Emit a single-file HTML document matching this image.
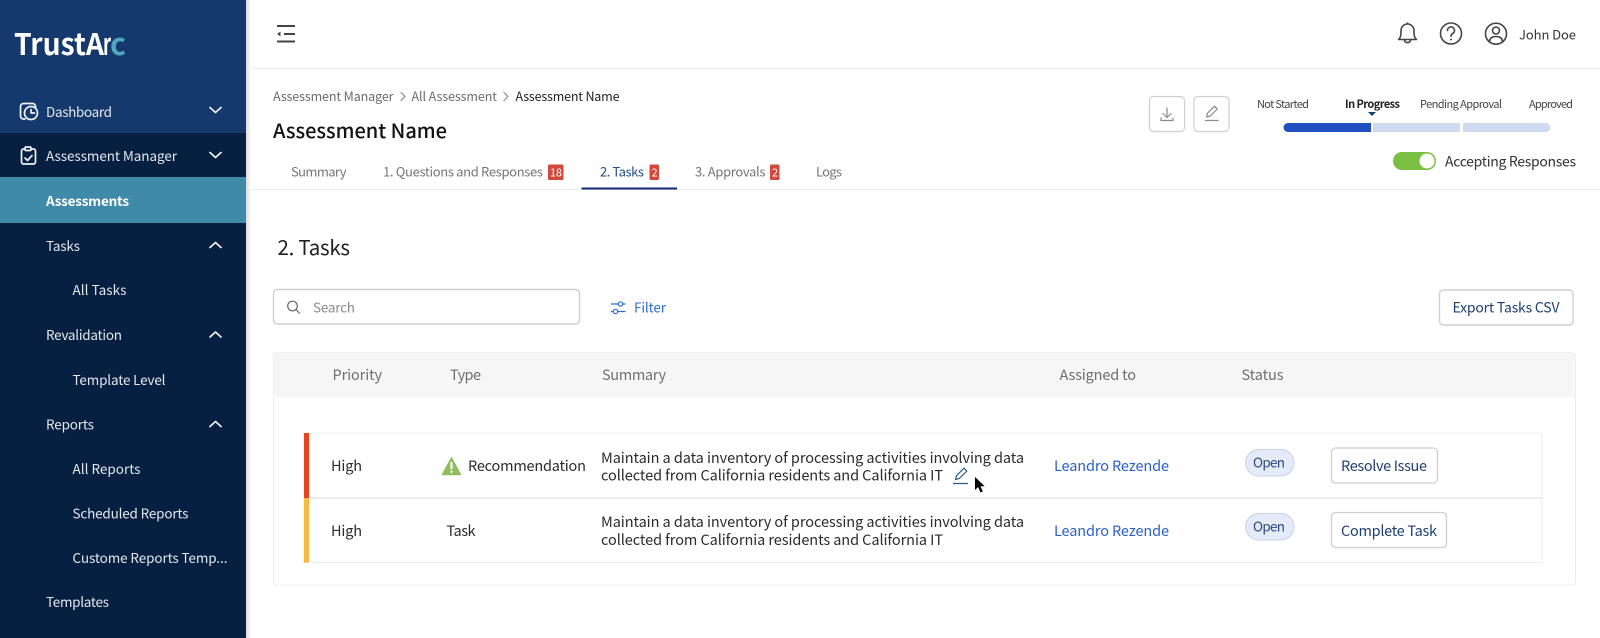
<!DOCTYPE html>
<html lang="en"><head><meta charset="utf-8"><title>Assessment Name - Tasks</title>
<style>
html,body{margin:0;padding:0;background:#fff;width:1600px;height:638px;overflow:hidden}
svg{display:block}
text{font-family:"Noto Sans CJK JP","Liberation Sans",sans-serif;white-space:pre}
.n{font-size:13.5px;fill:#e3e8ef}
.bc{font-size:12.5px;fill:#6b6b6b}
.tab{font-size:13px;fill:#757575}
.th{font-size:14.5px;fill:#6f6f6f}
.td{font-size:14.5px;fill:#2b2b2b}
.lnk{font-size:14.5px;fill:#2a5fc9}
.btn{font-size:14.5px;fill:#1f3f70}
.st{font-size:11px;fill:#444}
.bd{font-size:11px;fill:#fff}
.ic{fill:none;stroke:#444;stroke-width:1.6;stroke-linecap:round;stroke-linejoin:round}
.wi{fill:none;stroke:#eef2f7;stroke-width:1.7;stroke-linecap:round;stroke-linejoin:round}
.gr{fill:none;stroke:#8a8a8a;stroke-width:1.2;stroke-linecap:round;stroke-linejoin:round}
</style></head><body>
<svg width="1600" height="638" viewBox="0 0 1600 638" xmlns="http://www.w3.org/2000/svg">
<defs><linearGradient id="sh" x1="0" x2="1" y1="0" y2="0"><stop offset="0" stop-color="#000" stop-opacity=".14"/><stop offset="1" stop-color="#000" stop-opacity="0"/></linearGradient></defs>
<rect width="1600" height="638" fill="#fff"/>

<!-- Sidebar -->
<rect x="246" width="5" height="638" fill="url(#sh)"/>
<rect width="246" height="638" fill="#071f40"/>
<rect width="246" height="133" fill="#15396c"/>
<rect y="177" width="246" height="46" fill="#3f8aa8"/>
<text x="14" y="55" font-size="30" font-weight="700" fill="#fff" textLength="90" lengthAdjust="spacingAndGlyphs">TrustA</text>
<text x="103" y="55" font-size="30" font-weight="700" fill="#fff" textLength="8" lengthAdjust="spacingAndGlyphs">r</text>
<text x="110" y="55" font-size="30" font-weight="700" fill="#4fa6bf" textLength="16" lengthAdjust="spacingAndGlyphs">c</text>

<path class="wi" d="M25 119h-1.500a3 3 0 0 1-3-3v-9.500a3 3 0 0 1 3-3h9a3 3 0 0 1 3 3v1.500"/>
<circle class="wi" cx="31" cy="113" r="6.500"/><path class="wi" d="M31 109.500v3.500h3.500"/>
<path class="wi" d="M25 149h-1.500a2 2 0 0 0-2 2v11a2 2 0 0 0 2 2h10a2 2 0 0 0 2-2v-11a2 2 0 0 0-2-2h-1.500"/>
<rect class="wi" x="25" y="147" width="6" height="3.500" rx="1"/><path class="wi" d="M25 158l2.500 2.500 4.500-5"/>

<text class="n" x="46" y="117" textLength="66" lengthAdjust="spacing">Dashboard</text>
<text class="n" x="46" y="161" textLength="131" lengthAdjust="spacing">Assessment Manager</text>
<text class="n" x="46" y="206" textLength="83" lengthAdjust="spacing" font-weight="700" style="fill:#fff">Assessments</text>
<text class="n" x="46" y="251" textLength="34" lengthAdjust="spacing">Tasks</text>
<text class="n" x="72.500" y="295" textLength="54" lengthAdjust="spacing">All Tasks</text>
<text class="n" x="46" y="340" textLength="76" lengthAdjust="spacing">Revalidation</text>
<text class="n" x="72.500" y="385" textLength="93" lengthAdjust="spacing">Template Level</text>
<text class="n" x="46" y="429.500" textLength="48" lengthAdjust="spacing">Reports</text>
<text class="n" x="72.500" y="474" textLength="68" lengthAdjust="spacing">All Reports</text>
<text class="n" x="72.500" y="518.500" textLength="116" lengthAdjust="spacing">Scheduled Reports</text>
<text class="n" x="72.500" y="563" textLength="155" lengthAdjust="spacing">Custome Reports Temp...</text>
<text class="n" x="46" y="607" textLength="63" lengthAdjust="spacing">Templates</text>

<path class="wi" d="M210 107.500l5.500 5 5.500-5M210 152.500l5.500 5 5.500-5M210 247.500l5.500-5 5.500 5M210 337l5.500-5 5.500 5M210 426.500l5.500-5 5.500 5"/>

<!-- Top bar -->
<rect x="251" y="68" width="1349" height="1" fill="#eaeaea"/>
<path d="M277 26h18M284 34h11M277 41.500h18" stroke="#444" stroke-width="2" fill="none"/>
<path d="M277 34l3.500-2.500v5z" fill="#444"/>
<path class="ic" d="M1398.500 39.500c2-1.500 2.500-3.500 2.500-7v-2a6.500 6.500 0 0 1 13 0v2c0 3.500.5 5.500 2.500 7zM1404.500 40.500a3.200 3.200 0 0 0 6 0M1407.500 24v-1"/>
<circle class="ic" cx="1451" cy="33.500" r="10.500"/>
<path class="ic" d="M1447.500 30.500a3.500 3.500 0 1 1 5.200 3c-1.200.7-1.700 1.300-1.700 2.700"/><circle cx="1451" cy="39.500" r="1" fill="#444"/>
<circle class="ic" cx="1496" cy="33.700" r="10.500"/><circle class="ic" cx="1496" cy="30.500" r="3.500"/>
<path class="ic" d="M1489.500 41.500c.3-3.500 2.500-5 6.500-5s6.200 1.500 6.500 5"/>
<text x="1519" y="39.500" font-size="13" fill="#333" textLength="57" lengthAdjust="spacing">John Doe</text>

<!-- Breadcrumb and title -->
<text class="bc" x="273" y="101" textLength="120.500" lengthAdjust="spacing">Assessment Manager</text>
<path class="gr" d="M401 92.500l4 4-4 4M504 92.500l4 4-4 4"/>
<text class="bc" x="411.500" y="101" textLength="85.500" lengthAdjust="spacing">All Assessment</text>
<text class="bc" x="515.500" y="101" textLength="104" lengthAdjust="spacing" style="fill:#222">Assessment Name</text>
<text x="273" y="138" font-size="20" font-weight="500" fill="#111" textLength="174" lengthAdjust="spacing">Assessment Name</text>

<!-- Tabs -->
<rect x="251" y="189" width="1349" height="1" fill="#eaeaea"/>
<text class="tab" x="291" y="176.500" textLength="55.500" lengthAdjust="spacing">Summary</text>
<text class="tab" x="383" y="176.500" textLength="160" lengthAdjust="spacing">1. Questions and Responses</text>
<rect x="548" y="164.500" width="15.500" height="15.500" rx="1.500" fill="#d2483c"/>
<text class="bd" x="550" y="176.500" textLength="12" lengthAdjust="spacing">18</text>
<text class="tab" x="600" y="176.500" textLength="44" lengthAdjust="spacing" style="fill:#1f4a85">2. Tasks</text>
<rect x="649.500" y="164.500" width="9.500" height="15.500" rx="1.500" fill="#d2483c"/>
<text class="bd" x="651.500" y="176.500">2</text>
<rect x="581.500" y="187.500" width="95.500" height="2" fill="#12297a"/>
<text class="tab" x="695" y="176.500" textLength="70.500" lengthAdjust="spacing">3. Approvals</text>
<rect x="770" y="164.500" width="9.500" height="15.500" rx="1.500" fill="#d2483c"/>
<text class="bd" x="772" y="176.500">2</text>
<text class="tab" x="816" y="176.500" textLength="26" lengthAdjust="spacing">Logs</text>

<!-- Action buttons -->
<rect x="1149.500" y="96.500" width="35" height="35" rx="4" fill="#fff" stroke="#cfcfcf" stroke-width="1.200"/>
<rect x="1194" y="96.500" width="35" height="35" rx="4" fill="#fff" stroke="#cfcfcf" stroke-width="1.200"/>
<path class="gr" d="M1167 108v9.500M1163 113.500l4 4 4-4M1161 118v2.500h12v-2.500"/>
<path class="gr" d="M1206.500 117l1-3.800 7-7 2.800 2.800-7 7zM1205.500 120.500h12.500"/>

<!-- Status track -->
<text class="st" x="1257" y="108" textLength="52" lengthAdjust="spacing">Not Started</text>
<text class="st" x="1345" y="108" textLength="55" lengthAdjust="spacing" font-weight="700" style="fill:#222">In Progress</text>
<text class="st" x="1420" y="108" textLength="82" lengthAdjust="spacing">Pending Approval</text>
<text class="st" x="1529" y="108" textLength="44" lengthAdjust="spacing">Approved</text>
<path d="M1368 112h8l-4 4z" fill="#173f72"/>
<path d="M1371 123h-83a4.500 4.500 0 0 0 0 9h83z" fill="#1f4fc0"/>
<rect x="1373" y="123" width="87" height="9" fill="#cfdaf1"/>
<path d="M1463 123h83a4.500 4.500 0 0 1 0 9h-83z" fill="#cfdaf1"/>
<rect x="1393" y="152" width="43" height="18" rx="9" fill="#7ac143"/>
<circle cx="1427" cy="161" r="7.500" fill="#fff"/>
<text x="1445" y="166.500" font-size="14" fill="#333" textLength="131" lengthAdjust="spacing">Accepting Responses</text>

<!-- Heading -->
<text x="277.500" y="255" font-size="20.500" fill="#222" textLength="72.500" lengthAdjust="spacing">2. Tasks</text>

<!-- Search and filter -->
<rect x="273.500" y="289.500" width="306" height="34.500" rx="4" fill="#fff" stroke="#cfcfcf" stroke-width="1.400"/>
<circle cx="292.500" cy="306" r="4.800" fill="none" stroke="#666" stroke-width="1.200"/>
<path d="M296 309.500l3.800 4" stroke="#666" stroke-width="1.200" fill="none"/>
<text x="313" y="312.500" font-size="13.500" fill="#8a8a8a" textLength="42" lengthAdjust="spacing">Search</text>
<g fill="none" stroke="#2f6bd8" stroke-width="1.200">
<path d="M611 304h7M623 304h2.500M611 311.500h2M618 311.500h7.500"/><circle cx="620.500" cy="304" r="2.200"/><circle cx="615.500" cy="311.500" r="2.200"/></g>
<text x="634" y="312.500" font-size="13.500" fill="#2f6bd8" textLength="32" lengthAdjust="spacing">Filter</text>
<rect x="1439.500" y="290" width="133.500" height="35" rx="4" fill="#fff" stroke="#cfcfcf" stroke-width="1.400"/>
<text class="btn" x="1452.500" y="312.500" textLength="107" lengthAdjust="spacing" style="font-size:14px">Export Tasks CSV</text>

<!-- Table -->
<rect x="273.500" y="352.500" width="1302" height="232.500" rx="3" fill="#fff" stroke="#ececec"/>
<path d="M273.500 396v-40.500a3 3 0 0 1 3-3h1296a3 3 0 0 1 3 3v40.500z" fill="#f6f6f6" stroke="#f0f0f0"/>
<text class="th" x="332.500" y="380" textLength="49.500" lengthAdjust="spacing">Priority</text>
<text class="th" x="450" y="380" textLength="31" lengthAdjust="spacing">Type</text>
<text class="th" x="602" y="380" textLength="64" lengthAdjust="spacing">Summary</text>
<text class="th" x="1059.500" y="380" textLength="76.500" lengthAdjust="spacing">Assigned to</text>
<text class="th" x="1241.500" y="380" textLength="42" lengthAdjust="spacing">Status</text>

<!-- Rows -->
<rect x="304" y="433" width="1238" height="129.500" fill="#fff" stroke="#eeeeee"/>
<rect x="304" y="497" width="1238" height="2" fill="#ececec"/>
<rect x="304" y="433" width="5" height="65" fill="#e8451f"/>
<rect x="304" y="498" width="5" height="64.500" fill="#f6bb3c"/>

<text class="td" x="331" y="471" textLength="31" lengthAdjust="spacing">High</text>
<path d="M451.500 456.500l-9.500 17.500a.8.8 0 0 0 .7 1.200h17.600a.8.8 0 0 0 .7-1.200z" fill="#8fbc5e"/>
<rect x="450.500" y="462" width="2" height="7" fill="#fff"/><rect x="450.500" y="470.500" width="2" height="2.200" fill="#fff"/>
<text class="td" x="468" y="471" textLength="118" lengthAdjust="spacing">Recommendation</text>
<text class="td" x="601" y="462.800" textLength="423" lengthAdjust="spacing">Maintain a data inventory of processing activities involving data</text>
<text class="td" x="601" y="480.500" textLength="342" lengthAdjust="spacing">collected from California residents and California IT</text>
<path d="M955.500 479.500l1-3.800 7.500-7.500 2.800 2.800-7.500 7.500zM953 483.500h15" fill="none" stroke="#2c5a94" stroke-width="1.200"/>
<path d="M975 477l0 13 3.200-3 2.300 5.500 2.300-1-2.300-5.300h4.200z" fill="#000"/>
<text class="lnk" x="1054" y="471" textLength="115" lengthAdjust="spacing">Leandro Rezende</text>
<rect x="1245.500" y="449.500" width="48.500" height="26.500" rx="13.250" fill="#e4eaf8" stroke="#c5d3ef"/>
<text x="1253" y="467.500" font-size="13.500" fill="#2c4a7c" textLength="32" lengthAdjust="spacing">Open</text>
<rect x="1331.500" y="448" width="106" height="35" rx="4" fill="#fff" stroke="#cfcfcf" stroke-width="1.300"/>
<text class="btn" x="1341" y="471" textLength="86" lengthAdjust="spacing">Resolve Issue</text>

<text class="td" x="331" y="536" textLength="31" lengthAdjust="spacing">High</text>
<text class="td" x="446.500" y="536" textLength="29" lengthAdjust="spacing">Task</text>
<text class="td" x="601" y="527" textLength="423" lengthAdjust="spacing">Maintain a data inventory of processing activities involving data</text>
<text class="td" x="601" y="545" textLength="342" lengthAdjust="spacing">collected from California residents and California IT</text>
<text class="lnk" x="1054" y="536" textLength="115" lengthAdjust="spacing">Leandro Rezende</text>
<rect x="1245.500" y="513.500" width="48.500" height="26.500" rx="13.250" fill="#e4eaf8" stroke="#c5d3ef"/>
<text x="1253" y="531.500" font-size="13.500" fill="#2c4a7c" textLength="32" lengthAdjust="spacing">Open</text>
<rect x="1331.500" y="512.500" width="115" height="35" rx="4" fill="#fff" stroke="#cfcfcf" stroke-width="1.300"/>
<text class="btn" x="1341" y="536" textLength="96" lengthAdjust="spacing">Complete Task</text>
</svg>
</body></html>
